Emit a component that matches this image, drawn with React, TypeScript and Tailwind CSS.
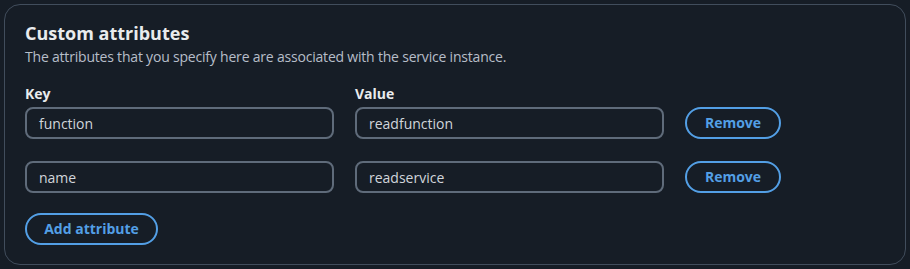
const rows = [
  { key: 'function', value: 'readfunction' },
  { key: 'name', value: 'readservice' },
];

function OutlineButton({ label, width }: { label: string; width: string }) {
  return (
    <button
      className={`${width} h-8 rounded-[20px] border-2 border-[#539fe5] text-[14px] font-bold leading-none text-[#539fe5] flex items-center justify-center`}
    >
      {label}
    </button>
  );
}

function TextField({ value }: { value: string }) {
  return (
    <div className="w-[309px] h-8 rounded-[8px] border-2 border-[#5f6b7a] px-[12px] flex items-center text-[14px] text-[#d1d5db]">
      {value}
    </div>
  );
}

export default function App() {
  return (
    <div className="w-[910px] h-[269px] bg-[#161d26] p-1 font-['Open_Sans',sans-serif]">
      <div className="h-[261px] rounded-[16px] border border-[#414d5c] px-5 pt-[17px]">
        <h2 className="text-[18px] leading-[22px] font-bold text-[#e9ebed]">Custom attributes</h2>
        <p className="text-[14px] leading-5 mt-[3px] tracking-[-0.2px] text-[#b6bec9]">
          The attributes that you specify here are associated with the service instance.
        </p>

        <div className="mt-[17px] flex gap-[21px] text-[14px] font-bold leading-5 text-[#e9ebed]">
          <span className="w-[309px]">Key</span>
          <span className="w-[309px]">Value</span>
        </div>

        <div className="mt-[3px] flex flex-col gap-[22px]">
          {rows.map((r) => (
            <div key={r.key} className="flex items-center gap-[21px]">
              <TextField value={r.key} />
              <TextField value={r.value} />
              <OutlineButton label="Remove" width="w-[96px]" />
            </div>
          ))}
        </div>

        <div className="mt-5">
          <OutlineButton label="Add attribute" width="w-[133px]" />
        </div>
      </div>
    </div>
  );
}
